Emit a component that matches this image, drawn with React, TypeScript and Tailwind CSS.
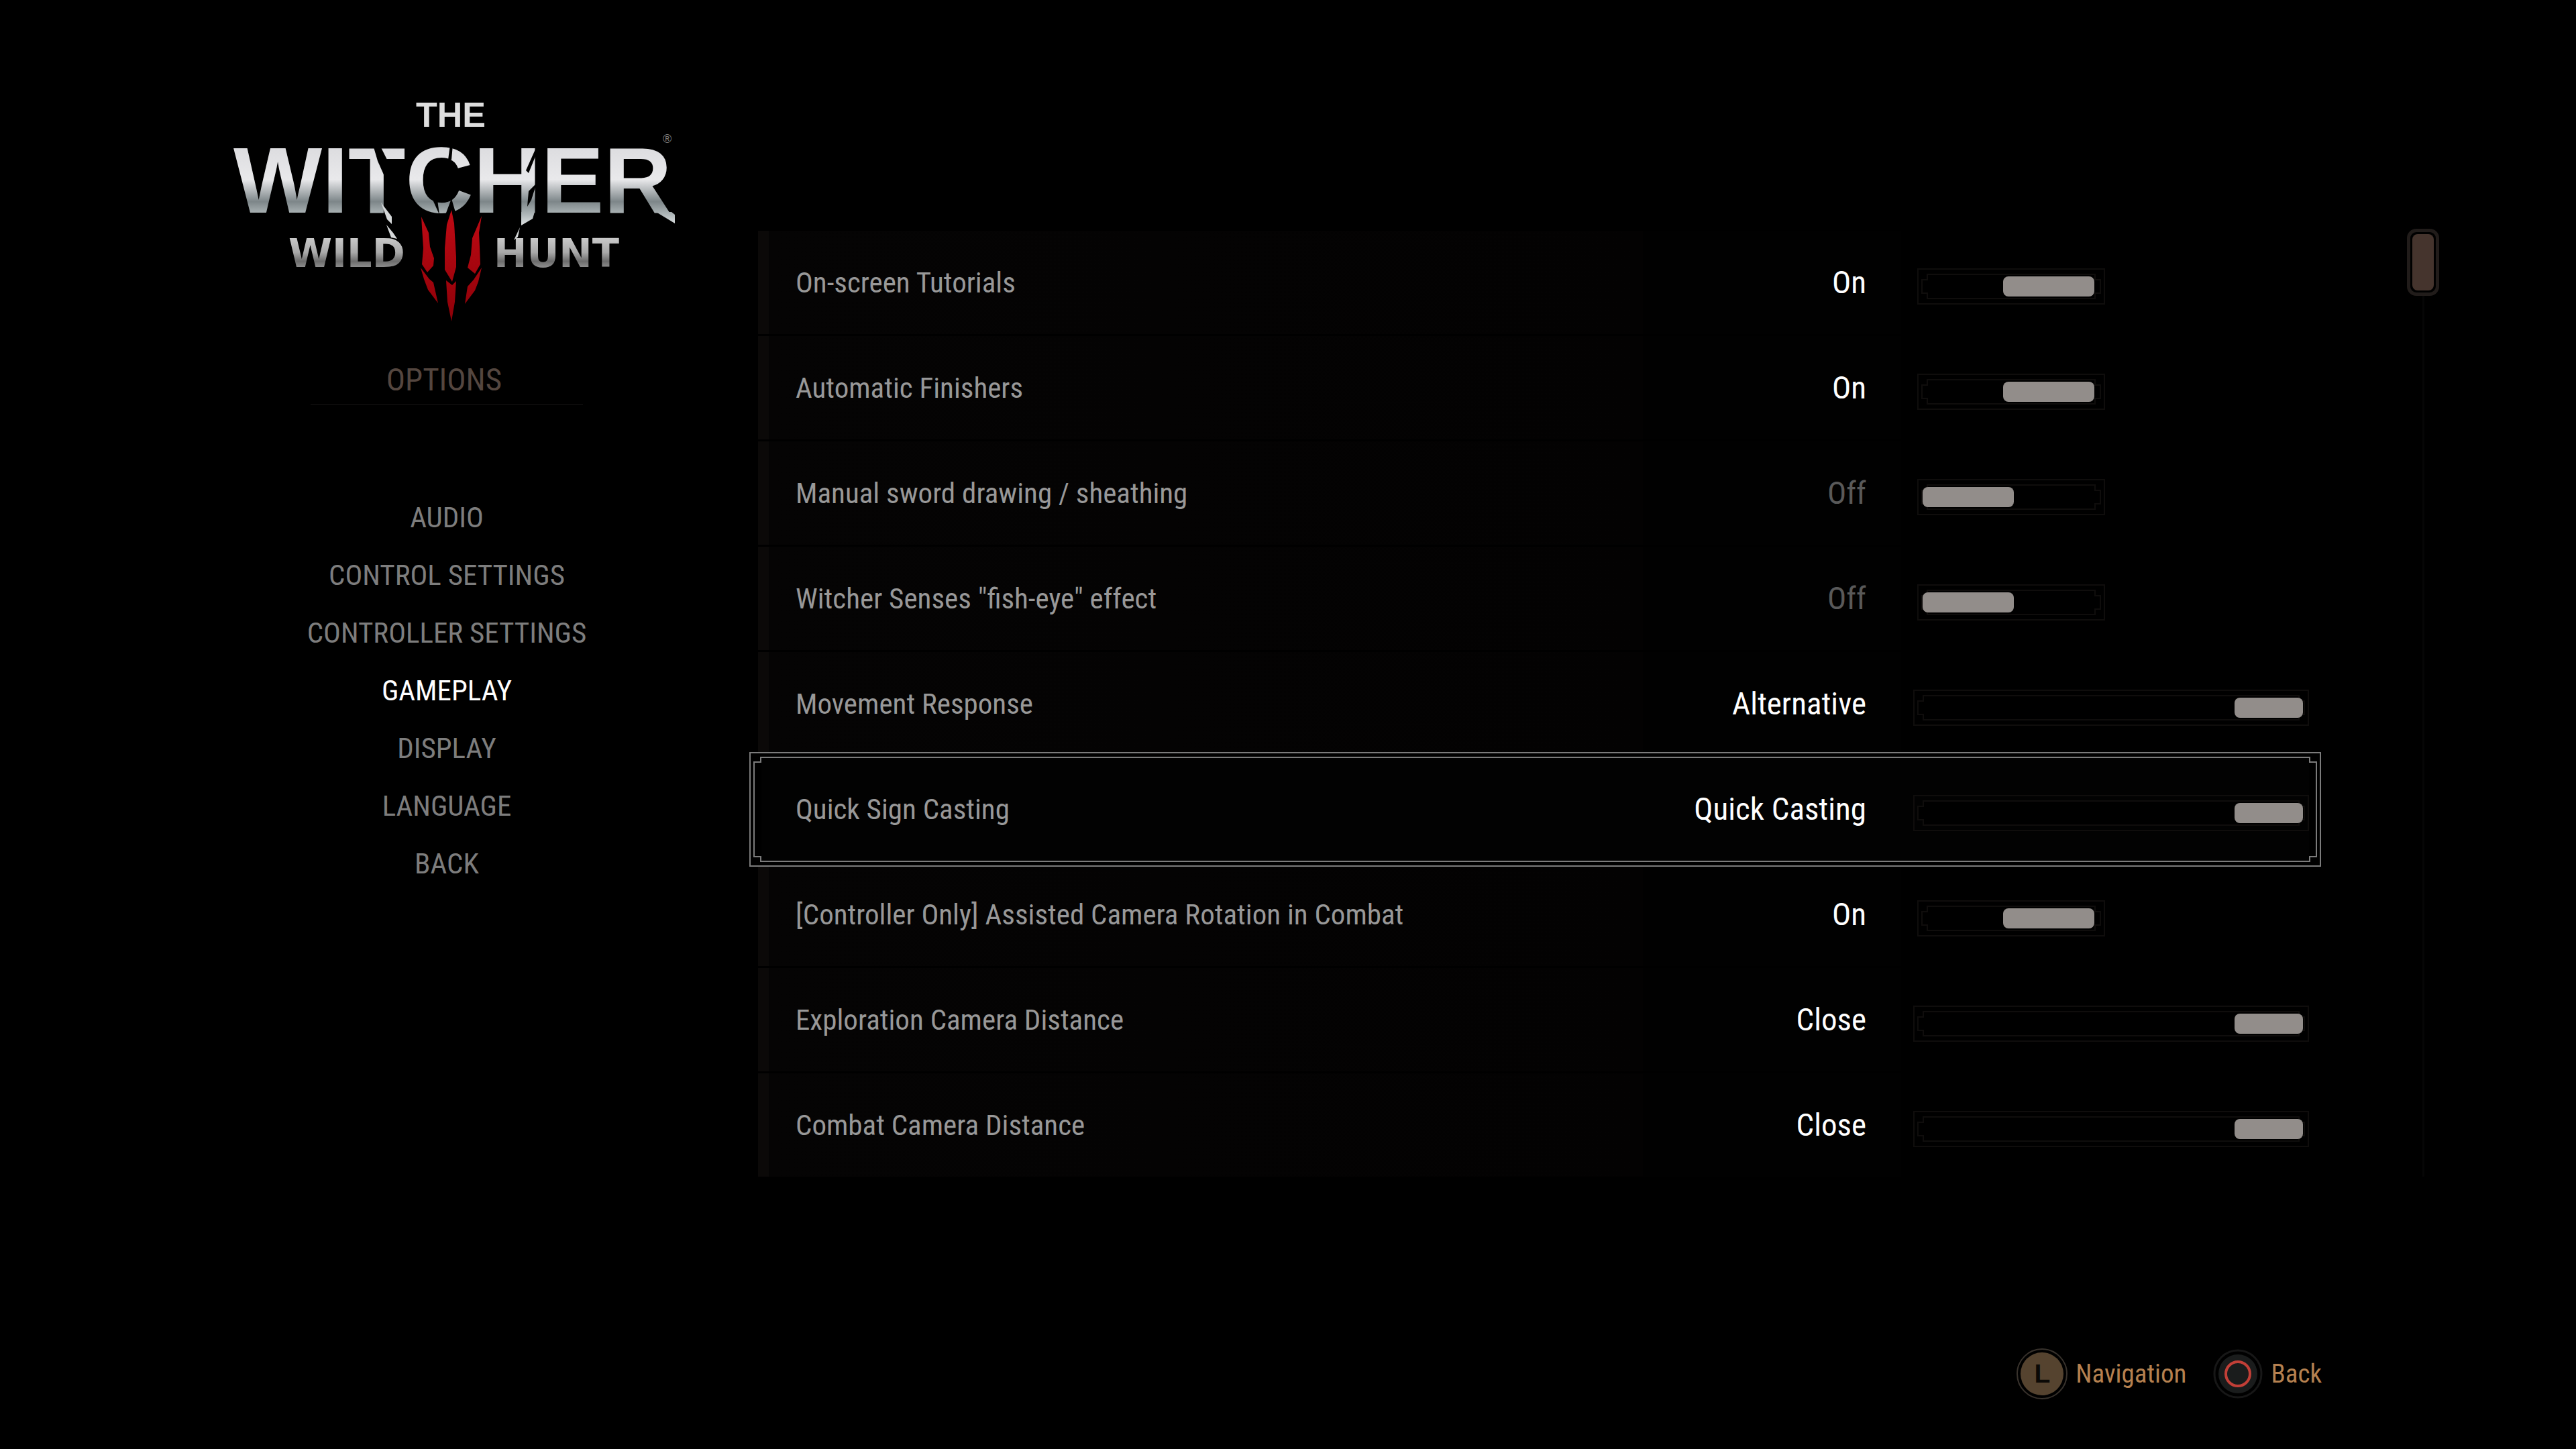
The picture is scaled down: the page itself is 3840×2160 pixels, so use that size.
import { useState } from "react";

type Setting = {
  label: string;
  kind: "toggle" | "slider";
  value: string;
  on?: boolean;
};

const menu = [
  "AUDIO",
  "CONTROL SETTINGS",
  "CONTROLLER SETTINGS",
  "GAMEPLAY",
  "DISPLAY",
  "LANGUAGE",
  "BACK",
];

const settings: Setting[] = [
  { label: "On-screen Tutorials", kind: "toggle", value: "On", on: true },
  { label: "Automatic Finishers", kind: "toggle", value: "On", on: true },
  { label: "Manual sword drawing / sheathing", kind: "toggle", value: "Off", on: false },
  { label: 'Witcher Senses "fish-eye" effect', kind: "toggle", value: "Off", on: false },
  { label: "Movement Response", kind: "slider", value: "Alternative" },
  { label: "Quick Sign Casting", kind: "slider", value: "Quick Casting" },
  {
    label: "[Controller Only] Assisted Camera Rotation in Combat",
    kind: "toggle",
    value: "On",
    on: true,
  },
  { label: "Exploration Camera Distance", kind: "slider", value: "Close" },
  { label: "Combat Camera Distance", kind: "slider", value: "Close" },
];

function Logo() {
  return (
    <svg
      viewBox="-14 0 720 360"
      className="h-[360px] w-[720px] shrink-0"
      role="img"
      aria-label="The Witcher Wild Hunt"
    >
      <defs>
        <linearGradient id="steel" x1="0" y1="88" x2="0" y2="206" gradientUnits="userSpaceOnUse">
          <stop offset="0" stopColor="#dcdcdf" />
          <stop offset="0.42" stopColor="#e9e9eb" />
          <stop offset="0.7" stopColor="#7d8689" />
          <stop offset="0.86" stopColor="#aeb6b8" />
          <stop offset="1" stopColor="#e0e4e5" />
        </linearGradient>
        <linearGradient id="iron" x1="0" y1="225" x2="0" y2="268" gradientUnits="userSpaceOnUse">
          <stop offset="0" stopColor="#c9c9c9" />
          <stop offset="0.5" stopColor="#a8a8a8" />
          <stop offset="0.8" stopColor="#6c6c6c" />
          <stop offset="1" stopColor="#8d8d8d" />
        </linearGradient>
        <linearGradient id="blood" x1="0" y1="183" x2="0" y2="349" gradientUnits="userSpaceOnUse">
          <stop offset="0" stopColor="#c00a14" />
          <stop offset="1" stopColor="#8d0008" />
        </linearGradient>
      </defs>

      <text x="300" y="59" fontSize="52" className="fill-[#dedede] font-['Liberation_Sans'] font-bold">
        THE
      </text>
      <text x="28" y="187" fontSize="140" fill="url(#steel)" className="font-['Liberation_Sans'] font-bold">
        WITCHER
      </text>
      <text x="110" y="268" fontSize="59" fill="url(#iron)" className="font-['DejaVu_Sans'] font-bold">
        WILD
      </text>
      <text x="416" y="268" fontSize="59" fill="url(#iron)" className="font-['DejaVu_Sans'] font-bold">
        HUNT
      </text>
      <text x="668" y="83" fontSize="18" className="fill-[#7c7c7c] font-['Liberation_Sans']">
        ®
      </text>

      {/* cuts through the title */}
      <g fill="#000">
        <path d="M236 86 L246 86 262 118 259 146 243 110Z" />
        <path d="M322 133 L331 160 335 190 326 170Z" />
        <path d="M351 86 L355 86 353 108 348 108Z" />
        <path d="M481 86 L485 86 468 128 464 124Z" />
        <path d="M480 143 L472 168 466 178 468 155Z" />
        <path d="M353 166 L360 190 344 190Z" />
      </g>
      {/* splinters and blade tips */}
      <g fill="#d5d8d9">
        <path d="M248 172 L264 193 264 204 257 197Z" />
        <path d="M256 205 L266 217 272 226 263 224Z" />
        <path d="M455 209 L452 223 446 228Z" />
      </g>
      <g fill="url(#steel)">
        <path d="M457 186 L477 186 474 196 457 206Z" />
        <path d="M658 186 L681 186 686 190 686 203Z" />
      </g>

      {/* claw marks */}
      <g fill="url(#blood)">
        <path d="M308 193 L319 217 321 238 327 255 326 266 317 276 309 264 311 240Z" />
        <path d="M307 269 L320 286 326 291 333 322 318 302 312 286Z" />
        <path d="M353 183 L357 203 360 253 360 268 354 290 343 272 343 240 346 205Z" />
        <path d="M345 288 L354 295 360 289 358 320 353 349 347 320Z" />
        <path d="M398 192 L394 217 395 238 396 264 388 278 377 269 382 250 384 225Z" />
        <path d="M398 269 L393 290 388 303 373 323 377 297 386 287Z" />
      </g>
    </svg>
  );
}

// Thin double line whose inner line steps in at the corners.
function ControlFrame() {
  return (
    <div aria-hidden className="absolute inset-0 border-2 border-[#0f0d0c]">
      <div className="absolute inset-x-[12px] inset-y-[6px] border-2 border-[#0f0d0c]" />
      <div className="absolute inset-x-[4px] inset-y-[14px] border-2 border-[#0f0d0c] bg-black" />
      <div className="absolute inset-x-[14px] inset-y-[8px] bg-black" />
    </div>
  );
}

function SelectionFrame() {
  return (
    <div aria-hidden className="absolute -top-2 -right-[5px] -bottom-[9px] -left-[13px] border-2 border-[#7b7b7b] bg-black">
      <div className="absolute inset-x-[14px] inset-y-[5px] border-2 border-[#7b7b7b]" />
      <div className="absolute inset-x-[4px] inset-y-[12px] border-2 border-[#7b7b7b] bg-black" />
      <div className="absolute inset-x-4 inset-y-[7px] bg-[#020202]" />
    </div>
  );
}

function Row({ setting, selected }: { setting: Setting; selected: boolean }) {
  const [on, setOn] = useState(setting.on ?? false);
  const [level, setLevel] = useState(4);
  const toggle = setting.kind === "toggle";
  const value = toggle ? (on ? "On" : "Off") : setting.value;
  const dim = toggle && !on;

  return (
    <li className={selected ? "relative z-10" : "relative"}>
      {selected && <SelectionFrame />}
      <label className="relative flex h-[154px]">
        <span className={selected ? "w-4" : "w-4 bg-[#0b0908]"} />
        <span
          className={`flex flex-1 items-center pl-10 text-[43px] leading-[60px] text-[#989898] ${
            selected ? "" : "bg-linear-to-r from-[#050404] to-[#030202]"
          }`}
        >
          {setting.label}
        </span>
        <span
          className={`flex w-[385px] items-center justify-end pr-[52px] text-[47px] leading-[60px] ${
            dim ? "text-[#595959]" : "text-white"
          } ${selected ? "" : "bg-[#010101]"}`}
        >
          {value}
        </span>
        <span className="flex w-[621px] items-center pt-3 pl-[18px]">
          {toggle ? (
            <span className="relative ml-[6px] flex h-[54px] w-[280px] items-center px-2">
              <ControlFrame />
              <input
                type="checkbox"
                role="switch"
                checked={on}
                onChange={(e) => setOn(e.target.checked)}
                className="relative flex h-[30px] w-full appearance-none pr-2 before:h-[30px] before:w-[136px] before:rounded-lg before:bg-[#928d8a] checked:before:ml-auto"
              />
            </span>
          ) : (
            <span className="relative flex h-[54px] w-[590px] items-center px-[9px]">
              <ControlFrame />
              <input
                type="range"
                min={0}
                max={4}
                value={level}
                aria-valuetext={value}
                onChange={(e) => setLevel(Number(e.target.value))}
                className="relative h-[30px] w-full appearance-none bg-transparent [&::-webkit-slider-thumb]:h-[30px] [&::-webkit-slider-thumb]:w-[102px] [&::-webkit-slider-thumb]:appearance-none [&::-webkit-slider-thumb]:rounded-lg [&::-webkit-slider-thumb]:bg-[#928d8a]"
              />
            </span>
          )}
        </span>
      </label>
    </li>
  );
}

function ScrollBar() {
  return (
    <div className="-mt-[3px] flex w-12 flex-col items-center">
      <div className="h-[100px] w-12 rounded-[14px] border-[5px] border-[#211c1a] p-[3px]">
        <div className="h-full rounded-lg bg-[#45342d]" />
      </div>
      <div className="w-[3px] flex-1 bg-[#060606]" />
    </div>
  );
}

export default function App() {
  const [section, setSection] = useState("GAMEPLAY");

  return (
    <div className="flex min-h-screen flex-col bg-black font-['Roboto_Condensed',Roboto,sans-serif]">
      <div className="flex flex-1 items-start pr-[204px] pl-[336px]">
        <aside className="flex w-[660px] flex-col items-center pt-[130px]">
          <Logo />
          <h1 className="mt-[42px] w-[406px] border-b-2 border-[#0c0b0b] pr-2 pb-[2px] text-center text-[47px] leading-[68px] text-[#54463f]">
            OPTIONS
          </h1>
          <nav className="mt-[124px] flex flex-col items-center">
            {menu.map((item) => (
              <button
                key={item}
                onClick={() => setSection(item)}
                className={`h-[86px] text-[43px] leading-[60px] whitespace-nowrap ${
                  item === section ? "text-white" : "text-[#7d7d7d]"
                }`}
              >
                {item}
              </button>
            ))}
          </nav>
        </aside>

        <main className="mt-[344px] ml-[134px] flex flex-1 gap-[133px]">
          <ul className="flex flex-1 flex-col gap-[3px]">
            {settings.map((s) => (
              <Row key={s.label} setting={s} selected={s.label === "Quick Sign Casting"} />
            ))}
          </ul>
          <ScrollBar />
        </main>
      </div>

      <footer className="flex items-center justify-end gap-10 pr-[379px] pb-[74px] text-[39px] leading-[76px] text-[#b5804f]">
        <button className="flex items-center gap-3">
          <span className="flex size-[76px] items-center justify-center rounded-full border-2 border-[#38322c] p-1">
            <span className="flex size-full items-center justify-center rounded-full bg-[#55432f] font-['Liberation_Sans'] text-[39px] leading-[60px] font-bold text-[#0b0906]">
              L
            </span>
          </span>
          Navigation
        </button>
        <button className="flex items-center gap-3">
          <svg viewBox="0 0 74 74" fill="none" className="size-[74px]" aria-hidden>
            <circle cx="37" cy="37" r="35" stroke="#171717" strokeWidth="3" />
            <circle cx="37" cy="37" r="29" fill="#1a1c1c" />
            <circle cx="37" cy="37" r="18" stroke="#c23f37" strokeWidth="4" />
          </svg>
          Back
        </button>
      </footer>
    </div>
  );
}
